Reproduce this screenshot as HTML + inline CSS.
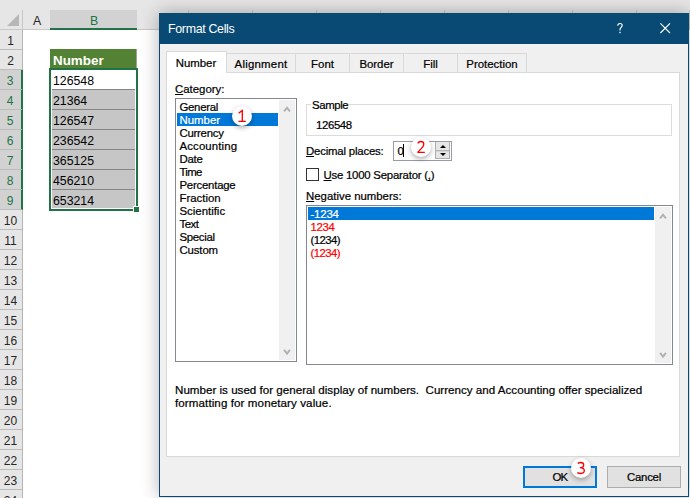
<!DOCTYPE html>
<html>
<head>
<meta charset="utf-8">
<style>
html,body{margin:0;padding:0;}
html{width:690px;height:498px;overflow:hidden;}
body{width:690px;height:498px;position:relative;overflow:hidden;background:#fff;font-family:"Liberation Sans",sans-serif;font-size:11.4px;color:#000;}
.abs{position:absolute;}
#sheet{left:0;top:0;width:690px;height:498px;background:#fff;overflow:hidden;}
#topstrip{left:0;top:0;width:690px;height:30px;background:#e6e6e6;}
.colh{top:10px;height:19px;line-height:22px;padding-left:1px;text-align:center;font-size:12.3px;color:#262626;border-right:1px solid #c8c8c8;box-sizing:border-box;}
.rowh{left:0;width:21px;padding-right:1px;height:19px;line-height:23px;text-align:center;font-size:12px;color:#262626;background:#e6e6e6;border-bottom:1px solid #bcbcbc;border-right:1px solid #b4b4b4;box-sizing:content-box;}
.rowh.sel{background:#d2d2d2;color:#217346;border-right:2px solid #217346;width:20px;}
.cell{left:52px;width:82px;height:19px;line-height:23px;font-size:12.3px;padding-left:1px;background:#c6c6c6;border-bottom:1px solid #858585;box-sizing:content-box;letter-spacing:0px;}
#dlg{left:159px;top:13px;width:530px;height:484px;background:#f0f0f0;border:1px solid #0a4a72;box-sizing:border-box;box-shadow:0 0 17px 0 rgba(0,0,0,0.30);}
#title{left:0;top:0;width:528px;height:30px;background:#084a73;color:#fff;font-size:11.7px;}
.tab{top:39px;height:19px;line-height:20px;text-align:center;border:1px solid #d9d9d9;border-bottom:none;box-sizing:border-box;background:#f0f0f0;font-size:11.4px;}
#panel{left:6px;top:58px;width:514px;height:385px;background:#fff;border:1px solid #d9d9d9;box-sizing:border-box;}
.t{white-space:nowrap;font-size:11.4px;line-height:13px;}
.u{text-decoration:underline;}
#dlg .t,#dlg .li,#dlg .tab,#dlg .btn{-webkit-text-stroke:0.22px currentColor;}
.li{left:3.5px;height:13px;line-height:15px;font-size:11.4px;white-space:nowrap;}
.badge{width:20px;height:20px;border-radius:10px;background:#fff;box-shadow:0 2px 5px rgba(0,0,0,0.32);color:#ff0000;font-size:16.5px;line-height:20px;text-align:center;}
.lb{border:1px solid #828790;background:#fff;box-sizing:border-box;}
.btn{top:452px;height:22px;box-sizing:border-box;background:#e1e1e1;border:1px solid #adadad;text-align:center;line-height:20px;font-size:11.4px;}
</style>
</head>
<body>
<div id="sheet" class="abs">
  <div id="topstrip" class="abs"></div>
  <!-- column headers -->
  <div class="abs colh" style="left:23px;width:28px;">A</div>
  <div class="abs colh" style="left:137px;width:52px;"></div>
  <div class="abs colh" style="left:189px;width:64px;"></div>
  <div class="abs colh" style="left:253px;width:64px;"></div>
  <div class="abs colh" style="left:317px;width:64px;"></div>
  <div class="abs colh" style="left:381px;width:64px;"></div>
  <div class="abs colh" style="left:445px;width:64px;"></div>
  <div class="abs colh" style="left:509px;width:64px;"></div>
  <div class="abs colh" style="left:573px;width:64px;"></div>
  <div class="abs colh" style="left:637px;width:53px;"></div>
  <!-- corner -->
  <div class="abs" style="left:0;top:10px;width:22px;height:19px;border-right:1px solid #c8c8c8;"></div>
  <svg class="abs" style="left:7px;top:14px;" width="13" height="13"><polygon points="12,0 12,12 0,12" fill="#b7b7b7"/></svg>
  <div class="abs" style="left:0;top:29px;width:690px;height:1px;background:#c8c8c8;"></div>
  <div class="abs colh" style="left:50px;width:87px;background:#d2d2d2;color:#217346;border-right:none;border-bottom:2px solid #217346;height:20px;">B</div>
  <!-- row headers -->
  <div class="abs rowh" style="top:30px;">1</div>
  <div class="abs rowh" style="top:50px;">2</div>
  <div class="abs rowh sel" style="top:70px;">3</div>
  <div class="abs rowh sel" style="top:90px;">4</div>
  <div class="abs rowh sel" style="top:110px;">5</div>
  <div class="abs rowh sel" style="top:130px;">6</div>
  <div class="abs rowh sel" style="top:150px;">7</div>
  <div class="abs rowh sel" style="top:170px;">8</div>
  <div class="abs rowh sel" style="top:190px;">9</div>
  <div class="abs rowh" style="top:210px;">10</div>
  <div class="abs rowh" style="top:230px;">11</div>
  <div class="abs rowh" style="top:250px;">12</div>
  <div class="abs rowh" style="top:270px;">13</div>
  <div class="abs rowh" style="top:290px;">14</div>
  <div class="abs rowh" style="top:310px;">15</div>
  <div class="abs rowh" style="top:330px;">16</div>
  <div class="abs rowh" style="top:350px;">17</div>
  <div class="abs rowh" style="top:370px;">18</div>
  <div class="abs rowh" style="top:390px;">19</div>
  <div class="abs rowh" style="top:410px;">20</div>
  <div class="abs rowh" style="top:430px;">21</div>
  <div class="abs rowh" style="top:450px;">22</div>
  <div class="abs rowh" style="top:470px;">23</div>
  <div class="abs rowh" style="top:490px;">24</div>
  <!-- cells -->
  <div class="abs" style="left:136px;top:49px;width:1px;height:19px;background:#9aa58a;"></div>
  <div class="abs" style="left:50px;top:49px;width:86px;height:19px;background:#548235;color:#fff;font-weight:bold;font-size:13.4px;line-height:23px;padding-left:3px;box-sizing:border-box;">Number</div>
  <div class="abs cell" style="top:70px;background:#fff;">126548</div>
  <div class="abs cell" style="top:90px;">21364</div>
  <div class="abs cell" style="top:110px;">126547</div>
  <div class="abs cell" style="top:130px;">236542</div>
  <div class="abs cell" style="top:150px;">365125</div>
  <div class="abs cell" style="top:170px;">456210</div>
  <div class="abs cell" style="top:190px;border-bottom:none;height:18px;">653214</div>
  <!-- selection border -->
  <div class="abs" style="left:49px;top:68px;width:89px;height:143px;border:2px solid #217346;box-sizing:border-box;"></div>
  <div class="abs" style="left:133px;top:206px;width:5px;height:5px;background:#217346;border:1px solid #fff;"></div>
</div>

<div class="abs" style="left:0;top:0;width:690px;height:498px;overflow:hidden;">
<div id="dlg" class="abs">
  <div id="title" class="abs">
    <div class="abs" style="left:8px;top:7px;font-size:12.4px;letter-spacing:-0.32px;line-height:16px;white-space:nowrap;">Format Cells</div>
    <svg class="abs" style="left:456px;top:8px;" width="8" height="12"><path d="M1.7 3.6 C1.8 2.1 2.8 1.5 4 1.5 C5.3 1.5 6.2 2.3 6.2 3.5 C6.2 5.1 4 5.6 4 7.4 L4 8.5" stroke="#fff" stroke-width="1.15" fill="none"/><rect x="3.35" y="9.8" width="1.3" height="1.4" fill="#fff"/></svg>
    <svg class="abs" style="left:500px;top:9px;" width="11" height="11"><path d="M0.4 0.4 L10 10 M10 0.4 L0.4 10" stroke="#fff" stroke-width="1.1" fill="none"/></svg>
  </div>
  <!-- tabs -->
  <div class="abs tab" style="left:66px;width:70px;letter-spacing:0.24px;">Alignment</div>
  <div class="abs tab" style="left:135px;width:55px;">Font</div>
  <div class="abs tab" style="left:189px;width:55px;">Border</div>
  <div class="abs tab" style="left:243px;width:55px;">Fill</div>
  <div class="abs tab" style="left:297px;width:70px;">Protection</div>
  <div id="panel" class="abs"></div>
  <div class="abs tab" style="left:6px;top:37px;width:61px;height:22px;background:#fff;line-height:23px;padding-right:1px;">Number</div>

  <!-- Category -->
  <div class="abs t" style="left:15px;top:69px;"><span class="u">C</span>ategory:</div>
  <div class="abs lb" style="left:15px;top:84px;width:122px;height:264px;">
    <div class="abs" style="left:103px;top:1px;width:16px;height:260px;background:#f0f0f0;"></div>
    <svg class="abs" style="left:105.5px;top:7px;" width="10" height="7"><path d="M2.1 5.3 L5 1.7 L7.9 5.3" stroke="#b0b0b0" stroke-width="1.9" fill="none"/></svg>
    <svg class="abs" style="left:105.5px;top:250px;" width="10" height="7"><path d="M2.1 0.9 L5 4.7 L7.9 0.9" stroke="#b0b0b0" stroke-width="1.9" fill="none"/></svg>
    <div class="abs" style="left:1px;top:14px;width:101px;height:13px;background:#0078d7;"></div>
    <div class="abs li" style="top:1px;letter-spacing:-0.29px;">General</div>
    <div class="abs li" style="top:14px;color:#fff;">Number</div>
    <div class="abs li" style="top:27px;letter-spacing:-0.26px;">Currency</div>
    <div class="abs li" style="top:40px;letter-spacing:0.13px;">Accounting</div>
    <div class="abs li" style="top:53px;letter-spacing:-0.27px;">Date</div>
    <div class="abs li" style="top:66px;letter-spacing:-0.67px;">Time</div>
    <div class="abs li" style="top:79px;letter-spacing:-0.23px;">Percentage</div>
    <div class="abs li" style="top:92px;">Fraction</div>
    <div class="abs li" style="top:105px;">Scientific</div>
    <div class="abs li" style="top:118px;letter-spacing:-0.47px;">Text</div>
    <div class="abs li" style="top:131px;letter-spacing:-0.31px;">Special</div>
    <div class="abs li" style="top:144px;letter-spacing:-0.13px;">Custom</div>
  </div>

  <!-- Sample -->
  <div class="abs" style="left:146px;top:90px;width:366px;height:32px;border:1px solid #dcdcdc;box-sizing:border-box;"></div>
  <div class="abs t" style="left:151px;top:85px;background:#fff;padding:0 1px;letter-spacing:-0.39px;">Sample</div>
  <div class="abs t" style="left:156px;top:105px;letter-spacing:-0.375px;">126548</div>

  <!-- Decimal places -->
  <div class="abs t" style="left:146px;top:131px;letter-spacing:-0.19px;"><span class="u">D</span>ecimal places:</div>
  <div class="abs" style="left:233px;top:127px;width:59px;height:20px;border:1px solid #979ca6;box-sizing:border-box;background:#fff;">
    <div class="abs t" style="left:3.5px;top:3px;letter-spacing:-0.4px;">0</div>
    <div class="abs" style="left:9px;top:2px;width:1px;height:13px;background:#000;"></div>
    <div class="abs" style="left:41px;top:0px;width:15px;height:17px;background:#e6e6e6;border:1px solid #adadad;border-top:none;box-sizing:border-box;"></div>
    <div class="abs" style="left:42px;top:8px;width:13px;height:1px;background:#b4b4b4;"></div>
    <div class="abs" style="left:42px;top:9px;width:13px;height:1px;background:#d6d6d6;"></div>
    <svg class="abs" style="left:45.5px;top:3px;" width="6" height="3"><polygon points="3,0 6,3 0,3" fill="#000"/></svg>
    <svg class="abs" style="left:45.5px;top:11px;" width="6" height="3"><polygon points="0,0 6,0 3,3" fill="#000"/></svg>
  </div>

  <!-- Checkbox -->
  <div class="abs" style="left:146px;top:154px;width:13px;height:13px;border:1px solid #333;box-sizing:border-box;background:#fff;"></div>
  <div class="abs t" style="left:163.5px;top:155px;letter-spacing:-0.23px;"><span class="u">U</span>se 1000 Separator (<span class="u">,</span>)</div>

  <!-- Negative numbers -->
  <div class="abs t" style="left:146px;top:176px;"><span class="u">N</span>egative numbers:</div>
  <div class="abs lb" style="left:146px;top:191px;width:367px;height:160px;">
    <div class="abs" style="left:348px;top:1px;width:16px;height:156px;background:#f0f0f0;"></div>
    <svg class="abs" style="left:350.5px;top:7px;" width="10" height="7"><path d="M2.1 5.3 L5 1.7 L7.9 5.3" stroke="#b0b0b0" stroke-width="1.9" fill="none"/></svg>
    <svg class="abs" style="left:350.5px;top:146px;" width="10" height="7"><path d="M2.1 0.9 L5 4.7 L7.9 0.9" stroke="#b0b0b0" stroke-width="1.9" fill="none"/></svg>
    <div class="abs" style="left:1px;top:1px;width:346px;height:13px;background:#0078d7;"></div>
    <div class="abs li" style="top:1px;color:#fff;letter-spacing:-0.17px;">-1234</div>
    <div class="abs li" style="top:14px;color:#ff0000;letter-spacing:-0.3px;">1234</div>
    <div class="abs li" style="top:27px;letter-spacing:-0.57px;">(1234)</div>
    <div class="abs li" style="top:40px;color:#ff0000;letter-spacing:-0.57px;">(1234)</div>
  </div>

  <!-- description -->
  <div class="abs t" style="left:15px;top:369px;white-space:pre;font-size:11.6px;letter-spacing:0.01px;">Number is used for general display of numbers.  Currency and Accounting offer specialized</div>
  <div class="abs t" style="left:15px;top:382px;font-size:11.6px;letter-spacing:0.09px;">formatting for monetary value.</div>

  <!-- buttons -->
  <div class="abs btn" style="left:363px;width:74px;border:2px solid #0078d7;line-height:18px;letter-spacing:-0.8px;">OK</div>
  <div class="abs btn" style="left:447px;width:74px;letter-spacing:-0.27px;">Cancel</div>

  <!-- badges -->
  <div class="abs badge" style="left:72px;top:92px;"><svg class="abs" style="left:0;top:0;" width="20" height="20"><path d="M6.7 7.1 L10.3 4.5 L10.3 15.3 M6.5 15.3 L13.8 15.3" stroke="#ff0000" stroke-width="1.35" fill="none" stroke-linejoin="miter"/></svg></div>
  <div class="abs badge" style="left:251px;top:123px;"><svg class="abs" style="left:0;top:0;" width="20" height="20"><path d="M6.7 6.4 C7.5 5.0 8.6 4.5 9.8 4.5 C11.6 4.5 12.8 5.6 12.8 7.2 C12.8 9 11.6 10.3 9.7 12.1 L6.6 15.4 L13.8 15.4" stroke="#ff0000" stroke-width="1.3" fill="none" stroke-linejoin="bevel"/></svg></div>
  <div class="abs badge" style="left:411px;top:444px;"><svg class="abs" style="left:0;top:0;" width="20" height="20"><path d="M6.7 5.5 C7.6 4.8 8.6 4.5 9.7 4.5 C11.5 4.5 12.7 5.4 12.7 6.9 C12.7 8.6 11.4 9.6 8.8 9.7 C11.7 9.8 13.3 10.8 13.3 12.6 C13.3 14.4 11.8 15.5 9.6 15.5 C8.3 15.5 7.2 15.2 6.3 14.6" stroke="#ff0000" stroke-width="1.3" fill="none"/></svg></div>
</div>
</div>
</body>
</html>
